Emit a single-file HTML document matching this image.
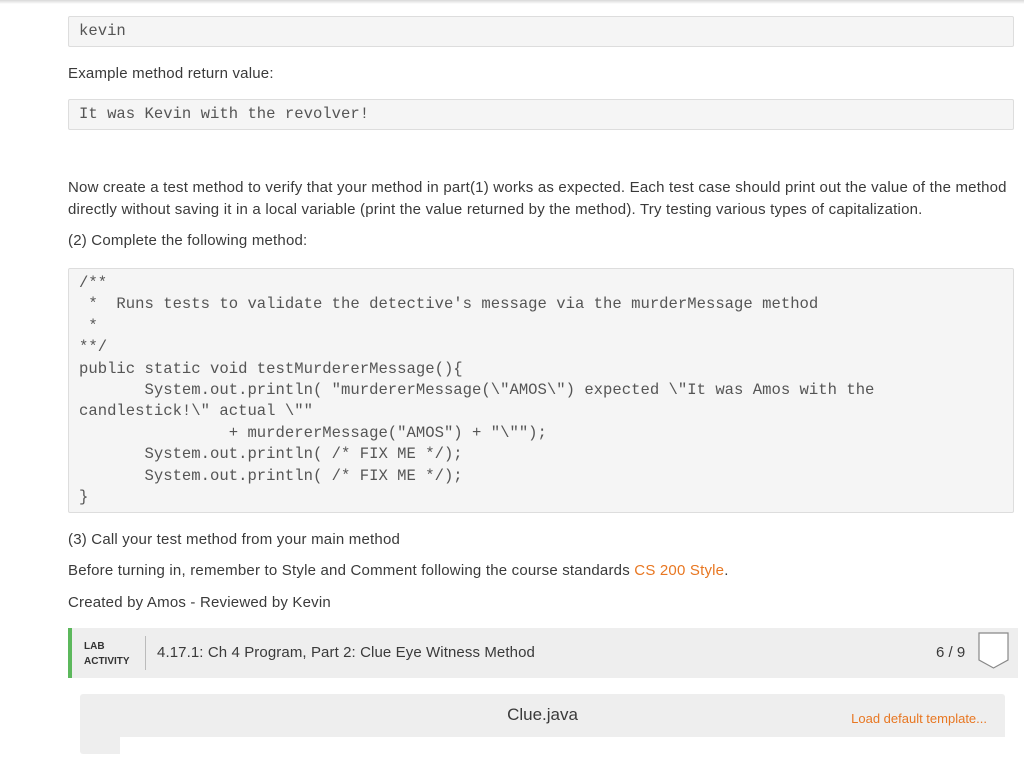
<!DOCTYPE html>
<html><head><style>
body{margin:0;width:1024px;height:748px;overflow:hidden;background:#fff;font-family:"Liberation Sans",sans-serif;color:#3a3a3a;position:relative}
.sh{position:absolute;left:0;top:0;width:1024px;height:4px;background:linear-gradient(#d8d8d8,#fff)}
.t{position:absolute;left:68px;font-size:15px;letter-spacing:0.2px;white-space:nowrap;line-height:22px}
.box{position:absolute;left:68px;width:946px;background:#f5f5f5;border:1px solid #ddd;border-radius:2px;box-sizing:border-box}
.mono{font-family:"Liberation Mono",monospace;font-size:15.6px;color:#555;white-space:pre;position:absolute;left:10px;line-height:21.4px}
a{color:#e87722;text-decoration:none}
</style></head><body>
<div class="sh"></div>
<div class="box" style="top:16px;height:31px"><div class="mono" style="top:4px">kevin</div></div>
<div class="t" style="top:63px">Example method return value:</div>
<div class="box" style="top:99px;height:31px"><div class="mono" style="top:4px">It was Kevin with the revolver!</div></div>
<div class="t" style="top:177px">Now create a test method to verify that your method in part(1) works as expected. Each test case should print out the value of the method<br>directly without saving it in a local variable (print the value returned by the method). Try testing various types of capitalization.</div>
<div class="t" style="top:230px">(2) Complete the following method:</div>
<div class="box" style="top:268px;height:245px"><div class="mono" style="top:4px">/**
 *  Runs tests to validate the detective's message via the murderMessage method
 *
**/
public static void testMurdererMessage(){
       System.out.println( "murdererMessage(\"AMOS\") expected \"It was Amos with the
candlestick!\" actual \""
                + murdererMessage("AMOS") + "\"");
       System.out.println( /* FIX ME */);
       System.out.println( /* FIX ME */);
}</div></div>
<div class="t" style="top:529px">(3) Call your test method from your main method</div>
<div class="t" style="top:560px">Before turning in, remember to Style and Comment following the course standards <a>CS 200 Style</a>.</div>
<div class="t" style="top:592px">Created by Amos - Reviewed by Kevin</div>
<div style="position:absolute;left:68px;top:628px;width:950px;height:50px;background:#eee;border-left:4px solid #5cb85c;box-sizing:border-box">
 <div style="position:absolute;left:12px;top:11px;font-size:10px;font-weight:bold;line-height:15px;color:#333">LAB<br>ACTIVITY</div>
 <div style="position:absolute;left:73px;top:8px;width:1px;height:34px;background:#bbb"></div>
 <div style="position:absolute;left:85px;top:16px;font-size:15px;letter-spacing:0.1px;white-space:nowrap">4.17.1: Ch 4 Program, Part 2: Clue Eye Witness Method</div>
 <div style="position:absolute;left:864px;top:16px;font-size:15px">6 / 9</div>
 <svg style="position:absolute;left:906px;top:4px" width="32" height="38"><path d="M1 1H30V28L15.5 36L1 28Z" fill="#fff" stroke="#888" stroke-width="1.2"/></svg>
</div>
<div style="position:absolute;left:80px;top:694px;width:925px;height:60px;background:#eee;border-radius:3px">
 <div style="position:absolute;left:0;width:925px;top:11px;text-align:center;font-size:17px">Clue.java</div>
 <div style="position:absolute;right:18px;top:17px;font-size:13px;color:#e87722">Load default template...</div>
 <div style="position:absolute;left:40px;top:43px;width:885px;height:20px;background:#fff"></div>
</div>
</body></html>
